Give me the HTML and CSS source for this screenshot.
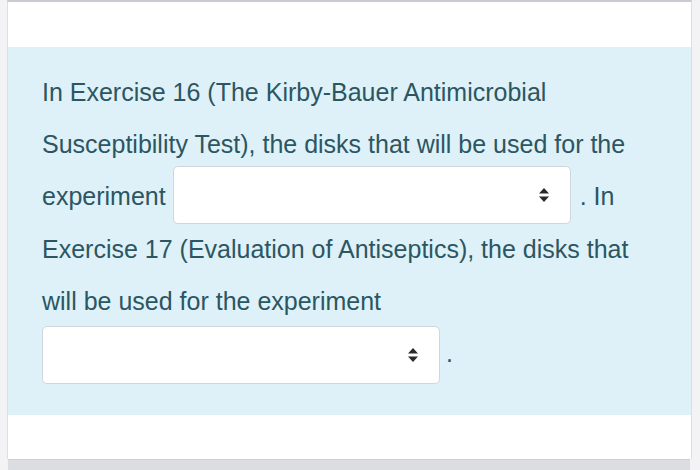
FILE: index.html
```html
<!DOCTYPE html>
<html>
<head>
<meta charset="utf-8">
<link rel="stylesheet" href="styles.css">
</head>
<body>
<div class="card">
  <div class="formulation">
    <p class="qtext">In Exercise 16 (The Kirby-Bauer Antimicrobial Susceptibility Test), the disks that will be used for the experiment <span class="select select-1"><svg class="arrows" width="12" height="16" viewBox="0 0 12 16"><path d="M6 1 L11 6.5 L1 6.5 Z M6 15 L11 9.5 L1 9.5 Z" fill="#2a2a2a"/></svg></span><span class="dot">.</span> In Exercise 17 (Evaluation of Antiseptics), the disks that will be used for the experiment <span class="select select-2"><svg class="arrows" width="12" height="16" viewBox="0 0 12 16"><path d="M6 1 L11 6.5 L1 6.5 Z M6 15 L11 9.5 L1 9.5 Z" fill="#2a2a2a"/></svg></span><span class="dot dot-2">.</span></p>
  </div>
</div>
<div class="next-card"></div>
</body>
</html>
```
FILE: styles.css
```css
html, body {
  margin: 0;
  padding: 0;
  background: #f3f3f5;
  height: 470px;
  overflow: hidden;
}
body {
  font-family: "Liberation Sans", Arial, sans-serif;
  color: #2b5662;
}
.card {
  margin: 0 8px 0 7px;
  height: 459px;
  box-sizing: border-box;
  background: #fff;
  border: 1px solid #dedee2;
  border-top: 2px solid #c9cad2;
  border-bottom: 0;
  padding-top: 45px;
}
.formulation {
  background: #def1f8;
  height: 368px;
  box-sizing: border-box;
  padding: 19px 34px 0 34px;
}
.qtext {
  margin: 0;
  font-size: 25px;
  line-height: 52px;
}
.select {
  display: inline-block;
  vertical-align: middle;
  box-sizing: border-box;
  width: 398px;
  height: 58px;
  background: #fff;
  border: 1px solid #cfd6dc;
  border-radius: 5px;
  position: relative;
}
.select-1 { margin: -7px 0 -1px 0; }
.select-2 { margin: -5px 0 -3px 0; }
.arrows {
  position: absolute;
  right: 20px;
  top: 20px;
}
.dot { margin-left: 9px; }
.dot-2 { margin-left: 6px; }
.next-card {
  margin: 0 10px 0 8px;
  height: 11px;
  background: #dcdde1;
  border-top: 1px solid #cfd0d6;
}
```
